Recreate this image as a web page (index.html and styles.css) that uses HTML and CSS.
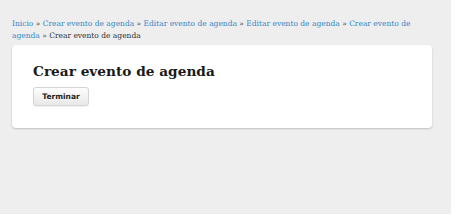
FILE: index.html
```html
<!DOCTYPE html>
<html lang="es">

<head>
  <meta charset="UTF-8">
  <title>Crear evento de agenda</title>
  <link rel="stylesheet" href="styles.css">
</head>

<body>
  <!-- zona principal -->
  <div class="page">
    <div class="breadcrumb">
      <a href="#">Inicio</a> » <a href="#">Crear evento de agenda</a> » <a href="#">Editar evento de agenda</a> » <a href="#">Editar evento de agenda</a> » <a href="#">Crear evento de agenda</a> » Crear evento de agenda
    </div>

    <div class="card">
      <h1>Crear evento de agenda</h1>
      <button class="btn">Terminar</button>
    </div>
  </div>
</body>

</html>
```

FILE: styles.css
```css
/* global */
body {
  margin: 0;
  padding: 0;
  background: #fff;
  font-family: "DejaVu Serif", serif;
}

.page {
  width: 451px;
  height: 214px;
  box-sizing: border-box;
  background-color: #eeeeee;
  padding: 18px 19px 0 12px;
}

/* breadcrumb */
.breadcrumb {
  font-size: 7.5px;
  line-height: 12px;
  color: #333;
}

.breadcrumb a {
  color: #3a87c5;
  text-decoration: none;
}

/* card */
.card {
  margin-top: 3px;
  background-color: #fff;
  border-radius: 4px;
  box-shadow: 0 1px 2px rgba(0, 0, 0, 0.2);
  padding: 17px 21px 22px;
}

.card h1 {
  margin: 0 0 7px;
  font-size: 13.7px;
  line-height: 18px;
  color: #1a1a1a;
}

.btn {
  display: block;
  font-family: "DejaVu Sans", sans-serif;
  font-weight: bold;
  font-size: 7.5px;
  color: #222;
  height: 19px;
  width: 56px;
  padding: 0;
  border: 1px solid #d4d4d4;
  border-radius: 3px;
  background: linear-gradient(#fdfdfd, #e8e8e8);
  box-shadow: 0 1px 1px rgba(0, 0, 0, 0.06);
}
```
